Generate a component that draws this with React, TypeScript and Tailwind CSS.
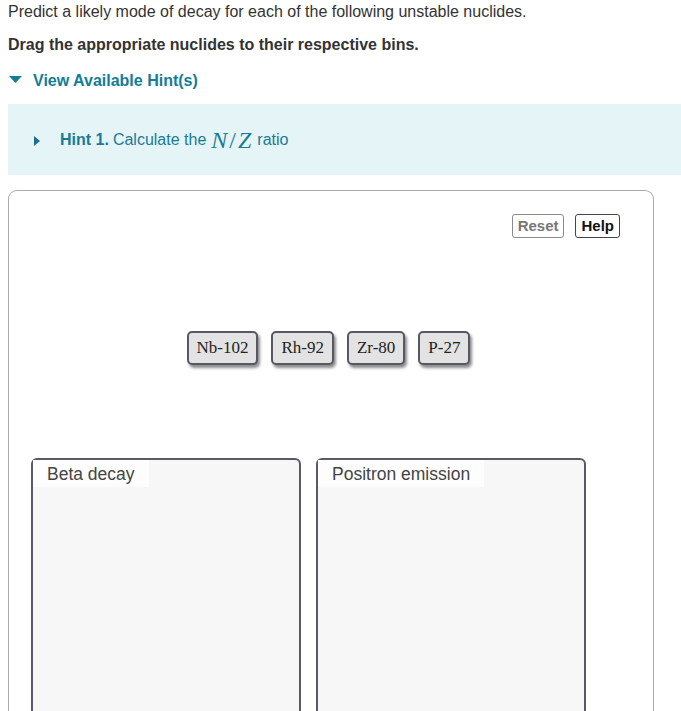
import React from "react";

const nuclides = ["Nb-102", "Rh-92", "Zr-80", "P-27"];
const bins = ["Beta decay", "Positron emission"];

const Tile = ({ label }: { label: string }) => (
  <div className="h-[34px] px-[8px] flex items-center rounded-[5px] border-2 border-[#585864] bg-[#e3e3e3] shadow-[2px_3px_3px_rgba(0,0,0,0.45)] font-['Liberation_Serif',serif] text-[17px] text-[#222]">
    {label}
  </div>
);

const Bin = ({ title }: { title: string }) => (
  <div className="w-[270px] h-[300px] rounded-t-[6px] border-2 border-[#5a5a66] bg-[#f7f7f7]">
    <div className="inline-block h-[27px] leading-[28px] px-[14px] bg-[#fdfdfd] text-[17.5px] text-[#444]">
      {title}
    </div>
  </div>
);

export default function App() {
  return (
    <div className="pl-2 bg-white min-h-[711px] font-['Liberation_Sans',Arial,sans-serif] overflow-hidden">
      <p className="h-6 leading-6 text-[16px] text-[#333]">
        Predict a likely mode of decay for each of the following unstable nuclides.
      </p>
      <p className="mt-[9px] h-6 leading-6 text-[16px] font-bold text-[#333]">
        Drag the appropriate nuclides to their respective bins.
      </p>
      <div className="mt-3 h-6 flex items-center gap-[11px] text-[16px] font-bold text-[#137c98]">
        <svg width="13" height="8" viewBox="0 0 13 8" className="ml-[1px] -mt-[3px]">
          <path d="M0 0 L13 0 L6.5 7 Z" fill="#137c98" />
        </svg>
        <span>View Available Hint(s)</span>
      </div>
      <div className="mt-[11px] h-[71px] bg-[#e5f5f7] flex items-center pl-[26px] text-[16px] text-[#1b7a96]">
        <svg width="6" height="10" viewBox="0 0 6 10" className="mt-[2px]">
          <path d="M0 0 L6 5 L0 10 Z" fill="#1b6f8a" />
        </svg>
        <span className="ml-[20px] font-bold">Hint 1.</span>
        <span className="ml-[4px]">Calculate the</span>
        <span className="ml-[5px] font-['Liberation_Serif',serif] italic text-[24px] leading-none">
          N<span className="not-italic px-[2px]">/</span>Z
        </span>
        <span className="ml-[6px]">ratio</span>
      </div>
      <div className="mt-[15px] w-[646px] h-[540px] rounded-t-[9px] border border-[#aaaaaa] border-b-0">
        <div className="pt-[23px] pr-[33px] flex justify-end gap-[11px]">
          <button className="h-6 px-[5px] rounded-[3px] border border-[#8a8a8a] text-[15px] font-bold text-[#777]">
            Reset
          </button>
          <button className="h-6 px-[5px] rounded-[3px] border border-[#444] text-[15px] font-bold text-[#111]">
            Help
          </button>
        </div>
        <div className="mt-[93px] flex justify-center gap-[13px] pr-[5px]">
          {nuclides.map((n) => (
            <Tile key={n} label={n} />
          ))}
        </div>
        <div className="mt-[93px] pl-[22px] flex gap-[15px]">
          {bins.map((b) => (
            <Bin key={b} title={b} />
          ))}
        </div>
      </div>
    </div>
  );
}
